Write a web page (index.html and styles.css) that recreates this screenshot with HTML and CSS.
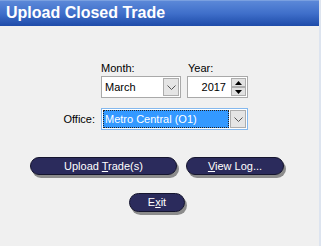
FILE: index.html
```html
<!DOCTYPE html>
<html>
<head>
<meta charset="utf-8">
<link rel="stylesheet" href="styles.css">
</head>
<body>
<div class="window">
  <div class="title">Upload Closed Trade</div>
  <div class="form">
    <div class="lbl month-lbl">Month:</div>
    <div class="lbl year-lbl">Year:</div>
    <div class="combo month">
      <span class="combo-text">March</span>
      <span class="drop"><svg width="9" height="5" viewBox="0 0 9 5"><polyline points="0.5,0.5 4.5,4.5 8.5,0.5" fill="none" stroke="#555" stroke-width="1"/></svg></span>
    </div>
    <div class="spin">
      <span class="spin-text">2017</span>
      <span class="spin-btns">
        <span class="sb"><svg width="7" height="4" viewBox="0 0 7 4"><polygon points="0,4 7,4 3.5,0" fill="#000"/></svg></span>
        <span class="sb"><svg width="7" height="4" viewBox="0 0 7 4"><polygon points="0,0 7,0 3.5,4" fill="#000"/></svg></span>
      </span>
    </div>
    <div class="lbl office-lbl">Office:</div>
    <div class="combo office">
      <span class="combo-text sel"><span class="focus">Metro Central (O1)</span></span>
      <span class="drop"><svg width="9" height="5" viewBox="0 0 9 5"><polyline points="0.5,0.5 4.5,4.5 8.5,0.5" fill="none" stroke="#555" stroke-width="1"/></svg></span>
    </div>
  </div>
  <div class="actions">
    <button class="pill upload">Upload <u>T</u>rade(s)</button>
    <button class="pill viewlog"><u>V</u>iew Log...</button>
  </div>
  <div class="exit-row">
    <button class="pill exit">E<u>x</u>it</button>
  </div>
</div>
</body>
</html>
```

FILE: styles.css
```css
html, body {
  margin: 0;
  padding: 0;
  background: #f0f0f0;
}
body {
  width: 321px;
  height: 246px;
  overflow: hidden;
  font-family: "Liberation Sans", Arial, sans-serif;
  font-size: 11px;
  color: #000;
}
.window {
  width: 319px;
  height: 246px;
  border-right: 2px solid #dde4ef;
  background: #f0f0f0;
}
.title {
  height: 26px;
  padding-left: 6px;
  background: linear-gradient(to bottom, #5b88d8 0%, #3f6fca 50%, #1e4ba9 100%);
  color: #fff;
  font-weight: bold;
  font-size: 16px;
  box-sizing: border-box;
  border-top: 1px solid #7aa0e0;
  line-height: 24px;
}
.form {
  display: grid;
  grid-template-columns: 101px 80px 6px 61px;
  grid-template-rows: 14px 22px 32px;
  padding-top: 36px;
}
.lbl {
  line-height: 13px;
}
.month-lbl { grid-column: 2; grid-row: 1; }
.year-lbl { grid-column: 4; grid-row: 1; padding-left: 1px; }
.office-lbl {
  grid-column: 1; grid-row: 3;
  text-align: right;
  padding-right: 6px;
  align-self: center;
  margin-top: 10px;
}
.combo {
  display: flex;
  box-sizing: border-box;
  height: 22px;
  border: 1px solid #a9a9a9;
  background: #fff;
  padding: 1px;
}
.month { grid-column: 2; grid-row: 2; }
.office {
  grid-column: 2 / 5; grid-row: 3;
  margin-top: 10px;
  border-color: #84b8ee;
}
.combo-text {
  flex: 1;
  line-height: 18px;
  padding-left: 2px;
}
.combo-text.sel {
  background: #3399ff;
  color: #fff;
  padding: 0;
  display: flex;
}
.focus {
  flex: 1;
  border: 1px dotted #222;
  line-height: 16px;
  padding-left: 1px;
}
.drop {
  width: 16px;
  height: 18px;
  box-sizing: border-box;
  border: 1px solid #adadad;
  background: #e5e5e5;
  display: flex;
  align-items: center;
  justify-content: center;
  margin-left: 1px;
}
.spin {
  grid-column: 4; grid-row: 2;
  display: flex;
  box-sizing: border-box;
  height: 22px;
  border: 1px solid #a9a9a9;
  background: #fff;
  padding: 1px;
}
.spin-text {
  flex: 1;
  text-align: right;
  line-height: 18px;
  padding-right: 5px;
}
.spin-btns {
  display: flex;
  flex-direction: column;
  width: 15px;
}
.sb {
  flex: 1;
  box-sizing: border-box;
  border: 1px solid #adadad;
  background: #e1e1e1;
  display: flex;
  align-items: center;
  justify-content: center;
}
.actions {
  display: flex;
  gap: 9px;
  padding-left: 30px;
  margin-top: 27px;
}
.pill {
  font-family: "Liberation Sans", Arial, sans-serif;
  font-size: 11px;
  color: #fff;
  background: #2b2b5c;
  border: 1px solid #15152e;
  border-radius: 10px;
  height: 18px;
  box-sizing: border-box;
  padding: 0;
  line-height: 16px;
  box-shadow: 2px 3px 0 #8c8c8c;
  text-align: center;
}
.upload { width: 147px; }
.viewlog { width: 98px; }
.exit-row {
  padding-left: 129px;
  margin-top: 18px;
}
.exit { width: 56px; height: 19px; line-height: 17px; }
```
